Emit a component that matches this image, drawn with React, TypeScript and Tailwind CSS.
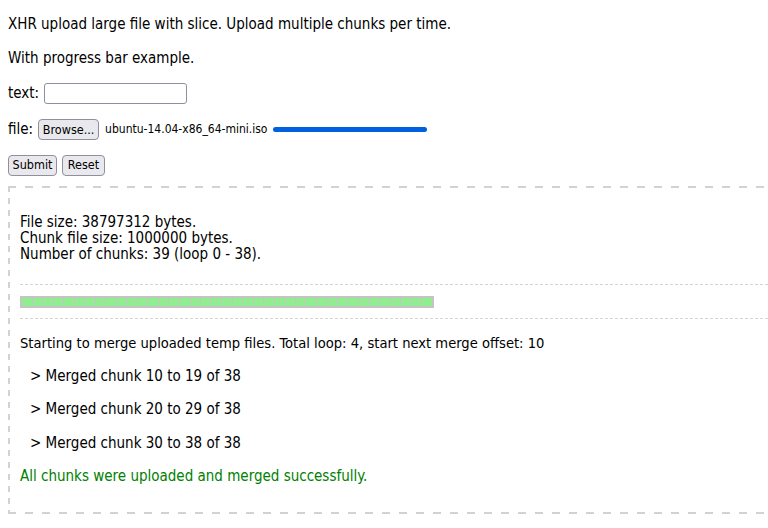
const CHUNKS = 39;

const MERGED = [
  '> Merged chunk 10 to 19 of 38',
  '> Merged chunk 20 to 29 of 38',
  '> Merged chunk 30 to 38 of 38',
];

function Btn({ children, w }: { children: React.ReactNode; w: string }) {
  return (
    <span
      className={`inline-flex h-[21px] ${w} items-center justify-center rounded-[4px] border border-[#8f8f9d] bg-[#e9e9ed] text-[12.5px] text-black`}
    >
      {children}
    </span>
  );
}

export default function App() {
  return (
    <div
      className="min-h-[528px] overflow-hidden bg-white pl-2 pt-[15px] text-[15px] text-black"
      style={{ fontFamily: 'Tahoma, "DejaVu Sans Condensed", "Liberation Sans", sans-serif' }}
    >
      <p className="leading-[18px]">
        XHR upload large file with slice. Upload multiple chunks per time.
      </p>
      <p className="mt-4 leading-[18px]">With progress bar example.</p>

      <div className="mt-4 flex h-[20px] items-center">
        <span>text:</span>
        <span className="ml-[5px] h-[21px] w-[143px] rounded-[3px] border border-[#8f8f9d] bg-white" />
      </div>

      <div className="mt-4 flex h-[20px] items-center">
        <span>file:</span>
        <span className="ml-[5px]">
          <Btn w="w-[61px]">Browse...</Btn>
        </span>
        <span className="ml-[6px] text-[12px]">ubuntu-14.04-x86_64-mini.iso</span>
        <span className="ml-[6px] h-[5px] w-[154px] rounded-full bg-[#0060df]" />
      </div>

      <div className="mt-4 flex h-[20px] items-center gap-[5px]">
        <Btn w="w-[49px]">Submit</Btn>
        <Btn w="w-[43px]">Reset</Btn>
      </div>

      <div className="mt-[11px] bg-no-repeat pb-[28px] pl-[12px] pt-[28px] [background-image:repeating-linear-gradient(to_right,#d2d2d2_0_8px,transparent_8px_17px),repeating-linear-gradient(to_right,#d2d2d2_0_8px,transparent_8px_17px),repeating-linear-gradient(to_bottom,#d2d2d2_0_6px,transparent_6px_12px)] [background-position:0_0,0_100%,0_0] [background-size:100%_2px,100%_2px,2px_100%]">
        <div className="leading-[16px]">
          <div>File size: 38797312 bytes.</div>
          <div>Chunk file size: 1000000 bytes.</div>
          <div>Number of chunks: 39 (loop 0 - 38).</div>
        </div>

        <div className="mt-[22px] border-t border-dashed border-[#d4d4d4]" />
        <div className="mt-[11px] flex h-[12px] w-[414px] gap-px border-2 border-[#c4c4c4] bg-[#c4c4c4]">
          {Array.from({ length: CHUNKS }).map((_, i) => (
            <span key={i} className="flex-1 bg-[#90ee90]" />
          ))}
        </div>
        <div className="mt-[10px] border-t border-dashed border-[#d4d4d4]" />

        <p className="mt-[15px] text-[14.6px] leading-[17.5px]">
          Starting to merge uploaded temp files. Total loop: 4, start next merge offset: 10
        </p>
        {MERGED.map((m) => (
          <p key={m} className="mt-4 pl-[10px] leading-[17.5px]">
            {m}
          </p>
        ))}
        <p className="mt-4 leading-[17.5px] text-[#008000]">
          All chunks were uploaded and merged successfully.
        </p>
      </div>
    </div>
  );
}
